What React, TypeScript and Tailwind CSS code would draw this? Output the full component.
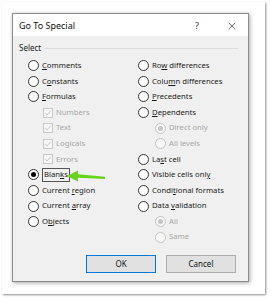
import React from 'react';

type Item = {
  label: React.ReactNode;
  kind: 'radio' | 'check' | 'sub';
  checked?: boolean;
  disabled?: boolean;
  focus?: boolean;
};

const u = (s: string) => <span className="underline underline-offset-[1px]">{s}</span>;

const left: Item[] = [
  { label: <>{u('C')}omments</>, kind: 'radio' },
  { label: <>C{u('o')}nstants</>, kind: 'radio' },
  { label: <>{u('F')}ormulas</>, kind: 'radio' },
  { label: 'Numbers', kind: 'check', checked: true, disabled: true },
  { label: 'Text', kind: 'check', checked: true, disabled: true },
  { label: 'Logicals', kind: 'check', checked: true, disabled: true },
  { label: 'Errors', kind: 'check', checked: true, disabled: true },
  { label: <>Blan{u('k')}s</>, kind: 'radio', checked: true, focus: true },
  { label: <>Current {u('r')}egion</>, kind: 'radio' },
  { label: <>Current {u('a')}rray</>, kind: 'radio' },
  { label: <>O{u('b')}jects</>, kind: 'radio' },
];

const right: Item[] = [
  { label: <>Ro{u('w')} differences</>, kind: 'radio' },
  { label: <>Colu{u('m')}n differences</>, kind: 'radio' },
  { label: <>{u('P')}recedents</>, kind: 'radio' },
  { label: <>{u('D')}ependents</>, kind: 'radio' },
  { label: 'Direct only', kind: 'sub', checked: true, disabled: true },
  { label: 'All levels', kind: 'sub', disabled: true },
  { label: <>La{u('s')}t cell</>, kind: 'radio' },
  { label: <>Visible cells onl{u('y')}</>, kind: 'radio' },
  { label: <>Condi{u('t')}ional formats</>, kind: 'radio' },
  { label: <>Data {u('v')}alidation</>, kind: 'radio' },
  { label: 'All', kind: 'sub', checked: true, disabled: true },
  { label: 'Same', kind: 'sub', disabled: true },
];

function Radio({ checked, disabled }: { checked?: boolean; disabled?: boolean }) {
  return (
    <span
      className={`flex-shrink-0 w-[11px] h-[11px] rounded-full border flex items-center justify-center ${
        disabled ? 'border-[#c4c4c4] bg-[#f7f7f7]' : 'border-[#333] bg-white'
      }`}
    >
      {checked && (
        <span className={`w-[5px] h-[5px] rounded-full ${disabled ? 'bg-[#c4c4c4]' : 'bg-black'}`} />
      )}
    </span>
  );
}

function Check() {
  return (
    <span className="flex-shrink-0 w-[10px] h-[10px] border border-[#c8c8c8] bg-[#f7f7f7] flex items-center justify-center">
      <svg viewBox="0 0 10 10" className="w-[8px] h-[8px]" fill="none" stroke="#b8b8b8" strokeWidth={1}>
        <path d="M1.5 5.2l2.2 2.3L8.5 2.2" />
      </svg>
    </span>
  );
}

function Row({ item }: { item: Item }) {
  const indent = item.kind === 'radio' ? '' : item.kind === 'check' ? 'pl-[15px]' : 'pl-[17px]';
  return (
    <div className={`h-[15.6px] flex items-center gap-[3px] ${indent}`}>
      {item.kind === 'check' ? <Check /> : <Radio checked={item.checked} disabled={item.disabled} />}
      <span
        className={`leading-none whitespace-nowrap ${item.disabled ? 'text-[#a6a6a6]' : 'text-[#1a1a1a]'} ${
          item.focus ? 'border border-[#555] px-[1px] py-[2px]' : ''
        }`}
      >
        {item.label}
      </span>
    </div>
  );
}

export default function App() {
  return (
    <div className="w-[271px] h-[300px] bg-white pl-[2px] pt-[2px]" style={{ fontFamily: '"Noto Sans", sans-serif' }}>
      <div className="w-[263px] h-[292px] bg-white pl-[10px] pt-[11px] shadow-[1px_1px_2px_rgba(0,0,0,0.45)]">
        <div className="relative w-[237px] h-[269px] border border-[#8c8c8c] flex flex-col shadow-[1px_1px_4px_rgba(0,0,0,0.35)]">
          <div className="h-[22px] bg-white flex items-center pl-[6px] pt-[1px] text-[9px] text-[#111]">
            <span className="flex-1">Go To Special</span>
            <span className="w-[10px] text-center text-[9px] text-[#333]">?</span>
            <span className="ml-[26px] mr-[12px] text-[#333]">
              <svg viewBox="0 0 10 10" className="w-[8px] h-[8px]" stroke="#333" strokeWidth={0.9}>
                <path d="M1 1l8 8M9 1l-8 8" />
              </svg>
            </span>
          </div>
          <div className="flex-1 bg-[#f0f0f0] text-[7.7px] px-[6px] pt-[6px]">
            <div className="flex items-center gap-[3px] h-[12px]">
              <span className="text-[#222] text-[8px]">Select</span>
              <span className="flex-1 h-px bg-[#dcdcdc] mr-[4px]" />
            </div>
            <div className="flex pl-[9px] pt-[4px]">
              <div className="w-[110px] flex flex-col">
                {left.map((it, i) => (
                  <Row key={i} item={it} />
                ))}
              </div>
              <div className="flex flex-col">
                {right.map((it, i) => (
                  <Row key={i} item={it} />
                ))}
              </div>
            </div>
            <div className="flex justify-end gap-[10px] mt-[10px] pr-[6px]">
              <button className="w-[70px] h-[18px] bg-[#e1e1e1] border border-[#0078d7] text-[8px] text-[#111]">OK</button>
              <button className="w-[70px] h-[18px] bg-[#e1e1e1] border border-[#adadad] text-[8px] text-[#111]">Cancel</button>
            </div>
          </div>
          <svg className="absolute left-[53px] top-[155px] w-[40px] h-[14px]" viewBox="0 0 40 14">
            <path d="M1 7L12 1.5V5.2L39 7.8V10L12 8.8V12.5Z" fill="#66d41c" />
          </svg>
        </div>
      </div>
    </div>
  );
}
